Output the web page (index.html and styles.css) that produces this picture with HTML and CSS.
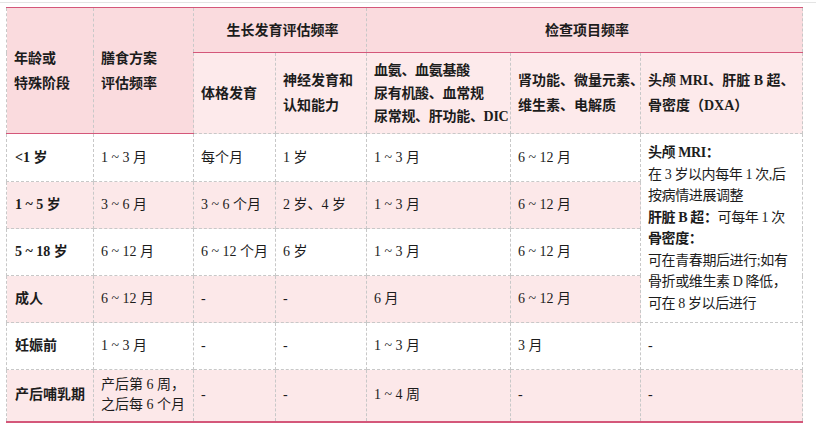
FILE: index.html
```html
<!DOCTYPE html>
<html lang="zh">
<head>
<meta charset="utf-8">
<link rel="stylesheet" href="styles.css">
</head>
<body>
<div class="page">
<table class="freq">
  <colgroup>
    <col class="c1"><col class="c2"><col class="c3"><col class="c4"><col class="c5"><col class="c6"><col class="c7">
  </colgroup>
  <thead>
    <tr class="h1">
      <th rowspan="2" class="hdark hbottom">年龄或<br>特殊阶段</th>
      <th rowspan="2" class="hdark hbottom">膳食方案<br>评估频率</th>
      <th colspan="2" class="hdark center">生长发育评估频率</th>
      <th colspan="3" class="hdark center">检查项目频率</th>
    </tr>
    <tr class="h2">
      <th class="hlight">体格发育</th>
      <th class="hlight">神经发育和<br>认知能力</th>
      <th class="hlight tri">血氨、血氨基酸<br>尿有机酸、血常规<br>尿常规、肝功能、DIC</th>
      <th class="hlight">肾功能、微量元素、<br>维生素、电解质</th>
      <th class="hlight">头颅 MRI、肝脏 B 超、<br>骨密度（DXA）</th>
    </tr>
  </thead>
  <tbody>
    <tr class="r48">
      <td class="stage">&lt;1 岁</td>
      <td>1 ~ 3 月</td>
      <td>每个月</td>
      <td>1 岁</td>
      <td>1 ~ 3 月</td>
      <td>6 ~ 12 月</td>
      <td rowspan="4" class="note">
        <b>头颅 MRI：</b><br>在 3 岁以内每年 1 次,后<br>按病情进展调整<br><b>肝脏 B 超：</b>可每年 1 次<br><b>骨密度：</b><br>可在青春期后进行;如有<br>骨折或维生素 D 降低，<br>可在 8 岁以后进行
      </td>
    </tr>
    <tr class="r47 pink">
      <td class="stage">1 ~ 5 岁</td>
      <td>3 ~ 6 月</td>
      <td>3 ~ 6 个月</td>
      <td>2 岁、4 岁</td>
      <td>1 ~ 3 月</td>
      <td>6 ~ 12 月</td>
    </tr>
    <tr class="r47">
      <td class="stage">5 ~ 18 岁</td>
      <td>6 ~ 12 月</td>
      <td>6 ~ 12 个月</td>
      <td>6 岁</td>
      <td>1 ~ 3 月</td>
      <td>6 ~ 12 月</td>
    </tr>
    <tr class="r47 pink">
      <td class="stage">成人</td>
      <td>6 ~ 12 月</td>
      <td>-</td>
      <td>-</td>
      <td>6 月</td>
      <td>6 ~ 12 月</td>
    </tr>
    <tr class="r47">
      <td class="stage">妊娠前</td>
      <td>1 ~ 3 月</td>
      <td>-</td>
      <td>-</td>
      <td>1 ~ 3 月</td>
      <td>3 月</td>
      <td>-</td>
    </tr>
    <tr class="r52 pink last">
      <td class="stage">产后哺乳期</td>
      <td class="tight">产后第 6 周，<br>之后每 6 个月</td>
      <td>-</td>
      <td>-</td>
      <td>1 ~ 4 周</td>
      <td>-</td>
      <td>-</td>
    </tr>
  </tbody>
</table>
</div>
</body>
</html>
```

FILE: styles.css
```css
html, body {
  margin: 0;
  padding: 0;
  background: #ffffff;
}

.page {
  padding: 4px 0 0 6px;
  border-top: 1px solid #e4e4e4;
  margin-top: 2px;
  font-family: "Liberation Serif", "Noto Sans CJK SC", serif;
  color: #1c1c1c;
}

.freq {
  border-collapse: collapse;
  table-layout: fixed;
  width: 796px;
  font-size: 14px;
}

.c1 { width: 87px; }
.c2 { width: 100px; }
.c3 { width: 82px; }
.c4 { width: 91px; }
.c5 { width: 144px; }
.c6 { width: 130px; }
.c7 { width: 162px; }

.freq th,
.freq td {
  border: 1px dashed #c8c8c8;
  padding: 0 2px 0 7px;
  text-align: left;
  vertical-align: middle;
  white-space: nowrap;
  overflow: visible;
}

.freq th {
  font-weight: 700;
  line-height: 25px;
}

.h1 th {
  border-top: 1px solid #d4577a;
}

.h1 {
  height: 45px;
}

.h2 {
  height: 81px;
}

.hdark {
  background: #fadbde;
}

.hlight {
  background: #fdeaeb;
  line-height: 24px;
}

.tri {
  line-height: 23px !important;
  letter-spacing: -0.3px;
}

.center {
  text-align: center !important;
  border-bottom: 1px solid #d4577a !important;
}

.hbottom {
  border-bottom: 1px solid #d4577a !important;
}

.freq td {
  line-height: 22px;
}

.r48 { height: 48px; }
.r47 { height: 47px; }
.r52 { height: 52px; }

.pink td {
  background: #fce8e9;
}

.stage {
  font-weight: 700;
  padding-left: 8px !important;
}

.note {
  background: #ffffff;
  line-height: 21.5px !important;
  letter-spacing: -0.4px;
}

.note b {
  font-weight: 700;
}

.tight {
  line-height: 20px !important;
}

.last td {
  border-bottom: 2px solid #d4577a;
}
```
